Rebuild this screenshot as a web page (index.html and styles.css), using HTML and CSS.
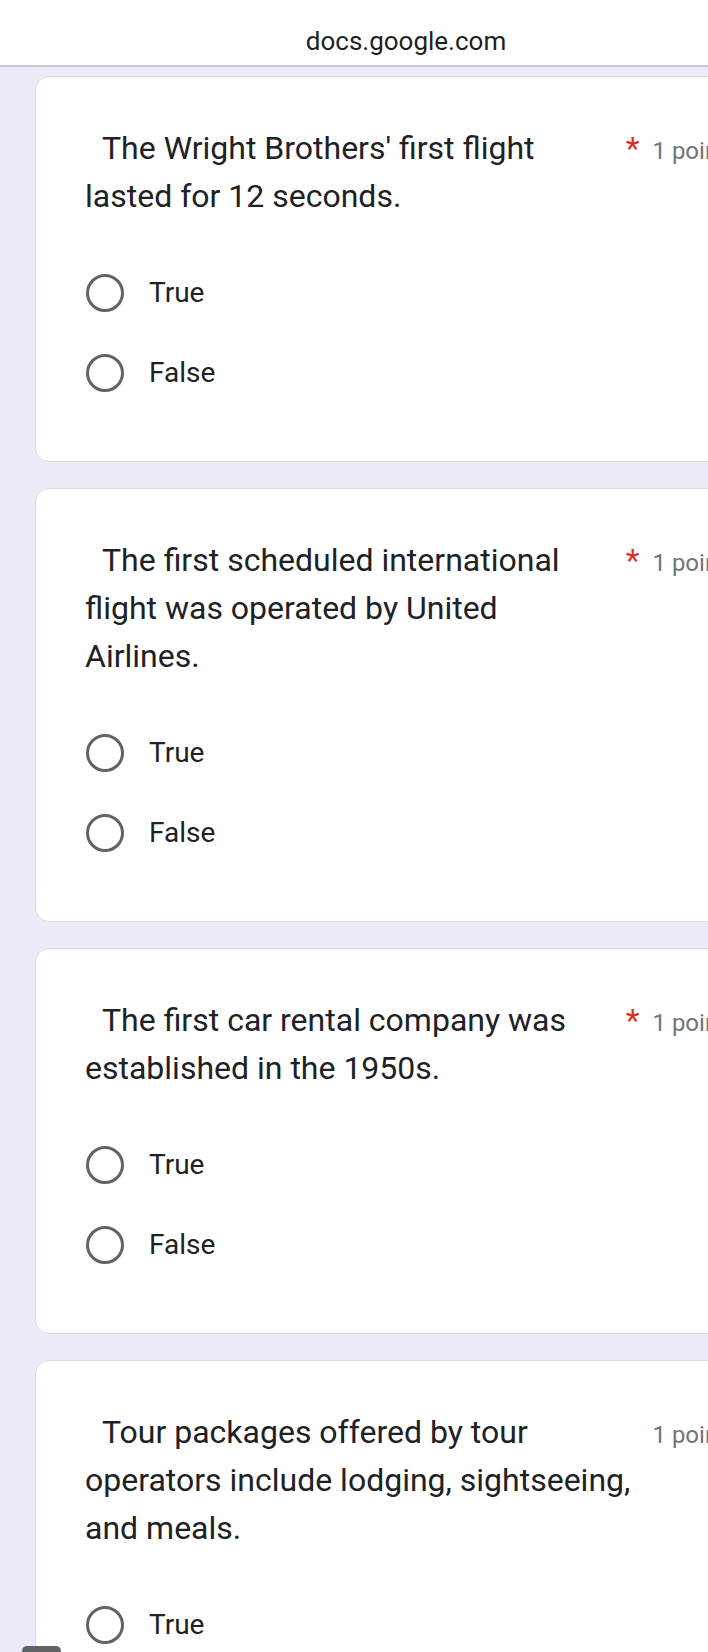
FILE: index.html
```html
<!DOCTYPE html>
<html lang="en">
<head>
<meta charset="utf-8">
<title>Quiz</title>
<link rel="stylesheet" href="styles.css">
</head>
<body>
<div class="page">
  <header class="urlbar"><span class="url">docs.google.com</span></header>
  <main class="list">
    <section class="card">
      <div class="title">
        <span class="meta"><span class="req">*</span><span class="pts">1 point</span></span>
        The Wright Brothers' first flight lasted for 12 seconds.
      </div>
      <div class="options">
        <div class="opt"><span class="radio"></span><span class="label">True</span></div>
        <div class="opt"><span class="radio"></span><span class="label">False</span></div>
      </div>
    </section>
    <section class="card">
      <div class="title">
        <span class="meta"><span class="req">*</span><span class="pts">1 point</span></span>
        The first scheduled international flight was operated by United<br>Airlines.
      </div>
      <div class="options">
        <div class="opt"><span class="radio"></span><span class="label">True</span></div>
        <div class="opt"><span class="radio"></span><span class="label">False</span></div>
      </div>
    </section>
    <section class="card">
      <div class="title">
        <span class="meta"><span class="req">*</span><span class="pts">1 point</span></span>
        The first car rental company was established in the 1950s.
      </div>
      <div class="options">
        <div class="opt"><span class="radio"></span><span class="label">True</span></div>
        <div class="opt"><span class="radio"></span><span class="label">False</span></div>
      </div>
    </section>
    <section class="card">
      <div class="title">
        <span class="meta"><span class="pts">1 point</span></span>
        Tour packages offered by tour operators include lodging, sightseeing, and meals.
      </div>
      <div class="options">
        <div class="opt"><span class="radio"></span><span class="label">True</span></div>
        <div class="opt"><span class="radio"></span><span class="label">False</span></div>
      </div>
    </section>
  </main>
  <div class="handle"></div>
</div>
</body>
</html>
```

FILE: styles.css
```css
html, body {
  margin: 0;
  padding: 0;
  overflow: hidden;
  background: #eeeaf7;
}
body {
  font-family: Roboto, "Liberation Sans", Arial, sans-serif;
  color: #202124;
}
.page {
  width: 812px;
  height: 1652px;
  overflow: hidden;
  position: relative;
}
.urlbar {
  box-sizing: border-box;
  height: 67px;
  padding-top: 16px;
  background: #ffffff;
  border-bottom: 2px solid #c9c7d2;
  display: flex;
  justify-content: center;
  align-items: center;
}
.url {
  font-size: 26px;
  line-height: 30px;
  color: #1f1f1f;
}
.list {
  padding: 9px 0 0 35px;
  display: flex;
  flex-direction: column;
  gap: 26px;
}
.card {
  width: 740px;
  box-sizing: border-box;
  background: #ffffff;
  border: 1px solid #dadce0;
  border-radius: 14px;
  padding: 47px 48px 48px 49px;
}
.title {
  font-size: 32px;
  line-height: 48px;
  text-indent: 17px;
  padding-right: 66px;
}
.meta {
  float: right;
  height: 48px;
  overflow: hidden;
  margin-left: 24px;
  margin-right: -66px;
  text-indent: 0;
}
.req {
  color: #d93025;
  font-size: 32px;
}
.pts {
  font-size: 24px;
  line-height: 24px;
  color: #70757a;
  margin-left: 13px;
}
.options {
  margin-top: 33px;
  display: flex;
  flex-direction: column;
}
.opt {
  height: 80px;
  display: flex;
  align-items: center;
}
.radio {
  width: 38px;
  height: 38px;
  box-sizing: border-box;
  border: 3.5px solid #5f6368;
  border-radius: 50%;
  margin-left: 1px;
  flex: none;
}
.label {
  font-size: 28px;
  line-height: 40px;
  margin-left: 25px;
  color: #202124;
}
.handle {
  position: absolute;
  left: 22px;
  top: 1646px;
  width: 39px;
  height: 12px;
  background: #5f6368;
  border-radius: 5px 5px 0 0;
}
```
